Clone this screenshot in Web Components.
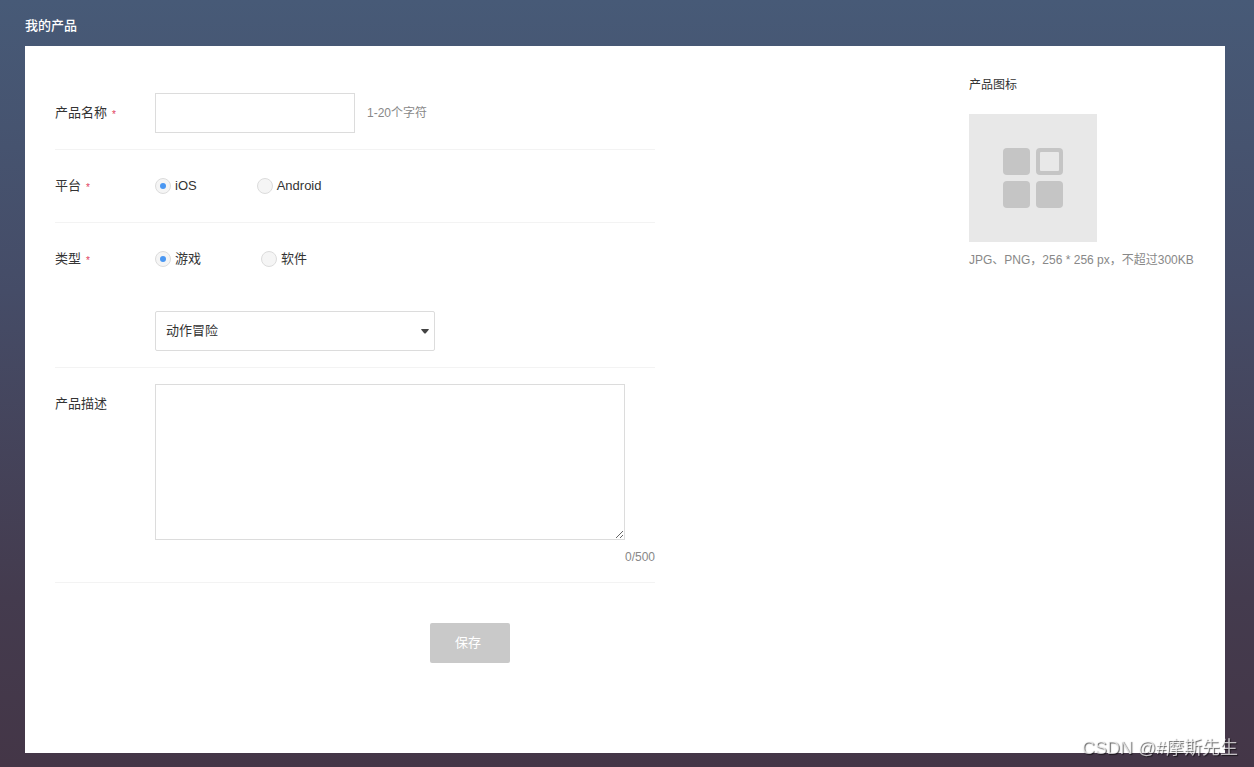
<!DOCTYPE html>
<html lang="zh-CN">
<head>
<meta charset="utf-8">
<meta name="viewport" content="width=device-width, initial-scale=1">
<title>我的产品</title>
<style>
  html { min-height: 100%; }
  body {
    margin: 0;
    min-height: 100vh;
    display: flex;
    font: 13px/20px "Liberation Sans", "Noto Sans CJK SC", sans-serif;
    color: #333;
    background: linear-gradient(#475a77, #454c67 38%, #443b4e 78%, #443647);
  }
</style>
</head>
<body>
<product-page>
  <span slot="title">我的产品</span>
  <product-form></product-form>
  <icon-upload slot="aside">
    <span slot="title">产品图标</span>
    <span slot="hint">JPG、PNG，256 * 256 px，不超过300KB</span>
  </icon-upload>
</product-page>
<page-watermark>CSDN @#摩斯先生</page-watermark>

<script>
const define = (name, html) => {
  const template = document.createElement('template');
  template.innerHTML = html;
  customElements.define(name, class extends HTMLElement {
    constructor() {
      super();
      this.attachShadow({ mode: 'open' }).append(template.content.cloneNode(true));
    }
    connectedCallback() { if (this.setup) this.setup(); }
  });
  return customElements.get(name);
};

define('product-page', `
  <style>
    :host { flex: 1; display: flex; flex-direction: column; box-sizing: border-box; padding: 16px 29px 14px 25px; }
    h1 { margin: 0 0 10px; font-size: 13px; line-height: 20px; font-weight: 500; color: #fff; }
    main { flex: 1; display: flex; justify-content: space-between; align-items: flex-start; gap: 40px; padding: 28px 30px; background: #fff; }
  </style>
  <h1><slot name="title"></slot></h1>
  <main><slot></slot><slot name="aside"></slot></main>
`);

define('form-row', `
  <style>
    :host { display: grid; grid-template-columns: 100px 1fr; padding: 16px 0; border-bottom: 1px solid #f3f3f3; }
    .label { display: flex; align-items: center; height: 40px; }
    :host([required]) .label::after { content: "*"; margin: 4px 0 0 5px; font-size: 10px; line-height: 12px; color: #e0405c; }
  </style>
  <div class="label"><slot name="label"></slot></div>
  <div><slot></slot></div>
`);

define('product-form', `
  <style>
    :host { display: block; flex: 0 1 600px; padding-top: 3px; }
    form { margin: 0; }
    .line { display: flex; align-items: center; height: 40px; }
    .name { gap: 12px; }
    .radios { gap: 60px; }
    .radios label { display: flex; align-items: center; gap: 4px; }
    .hint, .count { font-size: 12px; color: #888; }
    input, select, textarea { box-sizing: border-box; margin: 0; border: 1px solid #dcdcdc; background: #fff; font: inherit; color: inherit; outline: none; }
    input[type=text] { width: 200px; height: 40px; padding: 0 10px; }
    input[type=radio] { appearance: none; display: grid; place-items: center; width: 16px; height: 16px; border-radius: 50%; background: #f5f5f5; }
    input[type=radio]:checked::before { content: ""; width: 6px; height: 6px; border-radius: 50%; background: #4a97f2; }
    .select { display: grid; width: 280px; margin-top: 32px; align-items: center; }
    .select > * { grid-area: 1 / 1; }
    .select svg { justify-self: end; margin-right: 6px; pointer-events: none; }
    select { appearance: none; width: 100%; height: 40px; padding: 0 10px; border-radius: 2px; }
    textarea { display: block; width: 470px; max-width: 100%; height: 156px; padding: 10px; }
    .count { margin-top: 8px; line-height: 18px; text-align: right; }
    .actions { padding: 40px 145px 0 0; text-align: right; }
    button { width: 80px; height: 40px; padding: 0 4px 0 0; border: 0; border-radius: 2px; background: #c9c9c9; color: #fff; font: inherit; }
  </style>
  <form>
    <form-row required>
      <label slot="label" for="name">产品名称</label>
      <div class="line name"><input type="text" id="name" maxlength="20"><span class="hint">1-20个字符</span></div>
    </form-row>
    <form-row required>
      <span slot="label" id="platform">平台</span>
      <div class="line radios" role="radiogroup" aria-labelledby="platform">
        <label><input type="radio" name="platform" checked>iOS</label>
        <label><input type="radio" name="platform">Android</label>
      </div>
    </form-row>
    <form-row required>
      <span slot="label" id="kind">类型</span>
      <div class="line radios" role="radiogroup" aria-labelledby="kind">
        <label><input type="radio" name="kind" checked>游戏</label>
        <label><input type="radio" name="kind">软件</label>
      </div>
      <div class="select">
        <select aria-label="类型"><option>动作冒险</option></select>
        <svg width="8" height="5" viewBox="0 0 8 5" aria-hidden="true"><path d="M.7 0h6.6q.9 0 .4.8L4.8 4.2q-.8.8-1.6 0L.3.8Q-.2 0 .7 0z" fill="#444"/></svg>
      </div>
    </form-row>
    <form-row>
      <label slot="label" for="description">产品描述</label>
      <textarea id="description" maxlength="500"></textarea>
      <div class="count">0/500</div>
    </form-row>
    <div class="actions"><button type="button">保存</button></div>
  </form>
`).prototype.setup = function () {
  const area = this.shadowRoot.querySelector('textarea');
  const count = this.shadowRoot.querySelector('.count');
  area.oninput = () => { count.textContent = area.value.length + '/500'; };
};

define('icon-upload', `
  <style>
    :host { display: flex; flex-direction: column; flex: none; width: 226px; font-size: 12px; line-height: 20px; }
    .title { line-height: 22px; }
    .preview { display: grid; place-items: center; width: 128px; height: 128px; margin: 18px 0 8px; background: #e8e8e8; }
    .hint { color: #888; white-space: nowrap; }
  </style>
  <div class="title"><slot name="title"></slot></div>
  <div class="preview">
    <svg width="60" height="60" viewBox="0 0 60 60" fill="#c5c5c5" aria-hidden="true">
      <rect width="27" height="27" rx="4"/>
      <rect y="33" width="27" height="27" rx="4"/>
      <rect x="33" y="33" width="27" height="27" rx="4"/>
      <path fill-rule="evenodd" d="M37 0h19a4 4 0 0 1 4 4v19a4 4 0 0 1-4 4H37a4 4 0 0 1-4-4V4a4 4 0 0 1 4-4zm1 4a1 1 0 0 0-1 1v17a1 1 0 0 0 1 1h17a1 1 0 0 0 1-1V5a1 1 0 0 0-1-1z"/>
    </svg>
  </div>
  <div class="hint"><slot name="hint"></slot></div>
`);

define('page-watermark', `
  <style>
    :host { position: fixed; right: 16px; bottom: 7px; font-size: 18px; line-height: 24px; color: rgba(255, 255, 255, .7); text-shadow: 1px 1px 1px rgba(0, 0, 0, .6); pointer-events: none; }
  </style>
  <slot></slot>
`);
</script>
</body>
</html>
